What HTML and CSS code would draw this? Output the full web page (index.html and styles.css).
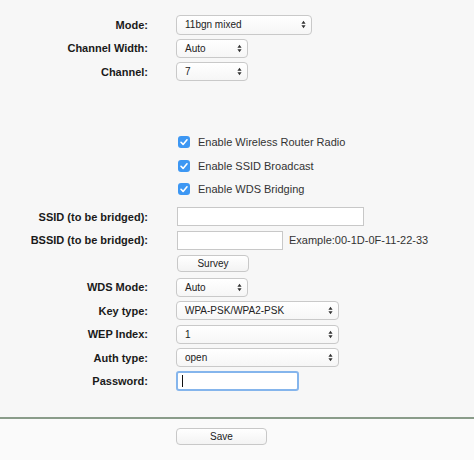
FILE: index.html
```html
<!DOCTYPE html>
<html>
<head>
<meta charset="utf-8">
<link rel="stylesheet" href="styles.css">
</head>
<body>
<div class="page">
  <div class="form">
    <div class="section">
      <div class="row"><label class="lbl">Mode:</label>
        <div class="sel w-mode"><span>11bgn mixed</span><svg class="arr" viewBox="0 0 6 10"><path d="M3 0.5L5.5 4H0.5Z M3 9.5L5.5 6H0.5Z"/></svg></div></div>
      <div class="row"><label class="lbl">Channel Width:</label>
        <div class="sel w-small"><span>Auto</span><svg class="arr" viewBox="0 0 6 10"><path d="M3 0.5L5.5 4H0.5Z M3 9.5L5.5 6H0.5Z"/></svg></div></div>
      <div class="row"><label class="lbl">Channel:</label>
        <div class="sel w-small"><span>7</span><svg class="arr" viewBox="0 0 6 10"><path d="M3 0.5L5.5 4H0.5Z M3 9.5L5.5 6H0.5Z"/></svg></div></div>
    </div>

    <div class="section checks">
      <div class="row"><span class="lbl"></span>
        <div class="chk"><span class="box"><svg viewBox="0 0 12 12"><path d="M3 6.3L5.1 8.4L9 3.8"/></svg></span>Enable Wireless Router Radio</div></div>
      <div class="row"><span class="lbl"></span>
        <div class="chk"><span class="box"><svg viewBox="0 0 12 12"><path d="M3 6.3L5.1 8.4L9 3.8"/></svg></span>Enable SSID Broadcast</div></div>
      <div class="row"><span class="lbl"></span>
        <div class="chk"><span class="box"><svg viewBox="0 0 12 12"><path d="M3 6.3L5.1 8.4L9 3.8"/></svg></span>Enable WDS Bridging</div></div>
    </div>

    <div class="section wds">
      <div class="row"><label class="lbl">SSID (to be bridged):</label>
        <div class="txt w-ssid"></div></div>
      <div class="row"><label class="lbl">BSSID (to be bridged):</label>
        <div class="ctl"><div class="txt w-bssid"></div><span class="hint">Example:00-1D-0F-11-22-33</span></div></div>
      <div class="row"><span class="lbl"></span>
        <div class="btn w-survey">Survey</div></div>
      <div class="row"><label class="lbl">WDS Mode:</label>
        <div class="sel w-small"><span>Auto</span><svg class="arr" viewBox="0 0 6 10"><path d="M3 0.5L5.5 4H0.5Z M3 9.5L5.5 6H0.5Z"/></svg></div></div>
      <div class="row"><label class="lbl">Key type:</label>
        <div class="sel w-wide"><span>WPA-PSK/WPA2-PSK</span><svg class="arr" viewBox="0 0 6 10"><path d="M3 0.5L5.5 4H0.5Z M3 9.5L5.5 6H0.5Z"/></svg></div></div>
      <div class="row"><label class="lbl">WEP Index:</label>
        <div class="sel w-wide"><span>1</span><svg class="arr" viewBox="0 0 6 10"><path d="M3 0.5L5.5 4H0.5Z M3 9.5L5.5 6H0.5Z"/></svg></div></div>
      <div class="row"><label class="lbl">Auth type:</label>
        <div class="sel w-wide"><span>open</span><svg class="arr" viewBox="0 0 6 10"><path d="M3 0.5L5.5 4H0.5Z M3 9.5L5.5 6H0.5Z"/></svg></div></div>
      <div class="row"><label class="lbl">Password:</label>
        <div class="txt focus w-pass"><span class="caret"></span></div></div>
    </div>
  </div>

  <div class="footer">
    <div class="row"><span class="lbl"></span>
      <div class="btn w-save">Save</div></div>
  </div>
</div>
</body>
</html>
```

FILE: styles.css
```css
html, body {
  margin: 0;
  padding: 0;
}
body {
  background: #f7f7f7;
  font-family: "Liberation Sans", Arial, Helvetica, sans-serif;
  font-size: 11px;
  color: #222;
  width: 474px;
  height: 460px;
  overflow: hidden;
}
.page {
  display: flex;
  flex-direction: column;
  height: 460px;
}
.form {
  padding-top: 13px;
  height: 404px;
  box-sizing: border-box;
}
.row {
  display: grid;
  grid-template-columns: 148px auto;
  column-gap: 28px;
  align-items: center;
  height: 23.5px;
}
.lbl {
  text-align: right;
  font-weight: bold;
  color: #1a1a1a;
  white-space: nowrap;
}
.checks {
  margin-top: 47px;
}
.wds {
  margin-top: 4px;
}

/* select look */
.sel {
  position: relative;
  height: 19px;
  box-sizing: border-box;
  border: 1px solid #c9c9c9;
  border-radius: 4px;
  background: linear-gradient(#ffffff, #f6f6f6);
  display: flex;
  align-items: center;
  padding-left: 8px;
  color: #222;
  font-size: 10px;
}
.sel .arr {
  position: absolute;
  right: 5px;
  top: 4px;
  width: 5px;
  height: 9px;
  fill: #333;
}
.w-mode { width: 136px; height: 20px; }
.w-small { width: 72px; }
.w-wide { width: 163px; }

/* checkboxes */
.chk {
  display: flex;
  align-items: center;
  color: #333;
  font-size: 11px;
  padding-left: 2px;
}
.box {
  width: 12px;
  height: 12px;
  border-radius: 3px;
  background: #3d97f3;
  margin-right: 8px;
  display: flex;
}
.box svg {
  width: 12px;
  height: 12px;
  fill: none;
  stroke: #fff;
  stroke-width: 1.6;
  stroke-linecap: round;
  stroke-linejoin: round;
}

/* text inputs */
.txt {
  height: 19px;
  box-sizing: border-box;
  background: #fff;
  border: 1px solid #c8c8c8;
  margin-left: 1px;
}
.w-ssid { width: 187px; }
.w-bssid { width: 106px; }
.w-pass {
  width: 123px;
  height: 20px;
  margin-left: 0;
}
.focus {
  border: 2px solid #85b5ec;
  border-radius: 3px;
  display: flex;
  align-items: center;
  padding-left: 4px;
}
.caret {
  width: 1px;
  height: 12px;
  background: #111;
}
.ctl {
  display: flex;
  align-items: center;
}
.hint {
  margin-left: 6px;
  color: #333;
}

/* buttons */
.btn {
  height: 17px;
  box-sizing: border-box;
  border: 1px solid #c8c8c8;
  border-radius: 4px;
  background: linear-gradient(#ffffff, #f3f3f3);
  display: flex;
  align-items: center;
  justify-content: center;
  color: #222;
  font-size: 10px;
  margin-left: 1px;
}
.w-survey { width: 72px; }
.w-save { width: 91px; height: 17px; margin-left: 0; }

/* footer */
.footer {
  border-top: 2px solid #8a9c8a;
  background: #fafafa;
  padding-top: 6px;
  flex: 1;
  margin-top: 13px;
}
```
